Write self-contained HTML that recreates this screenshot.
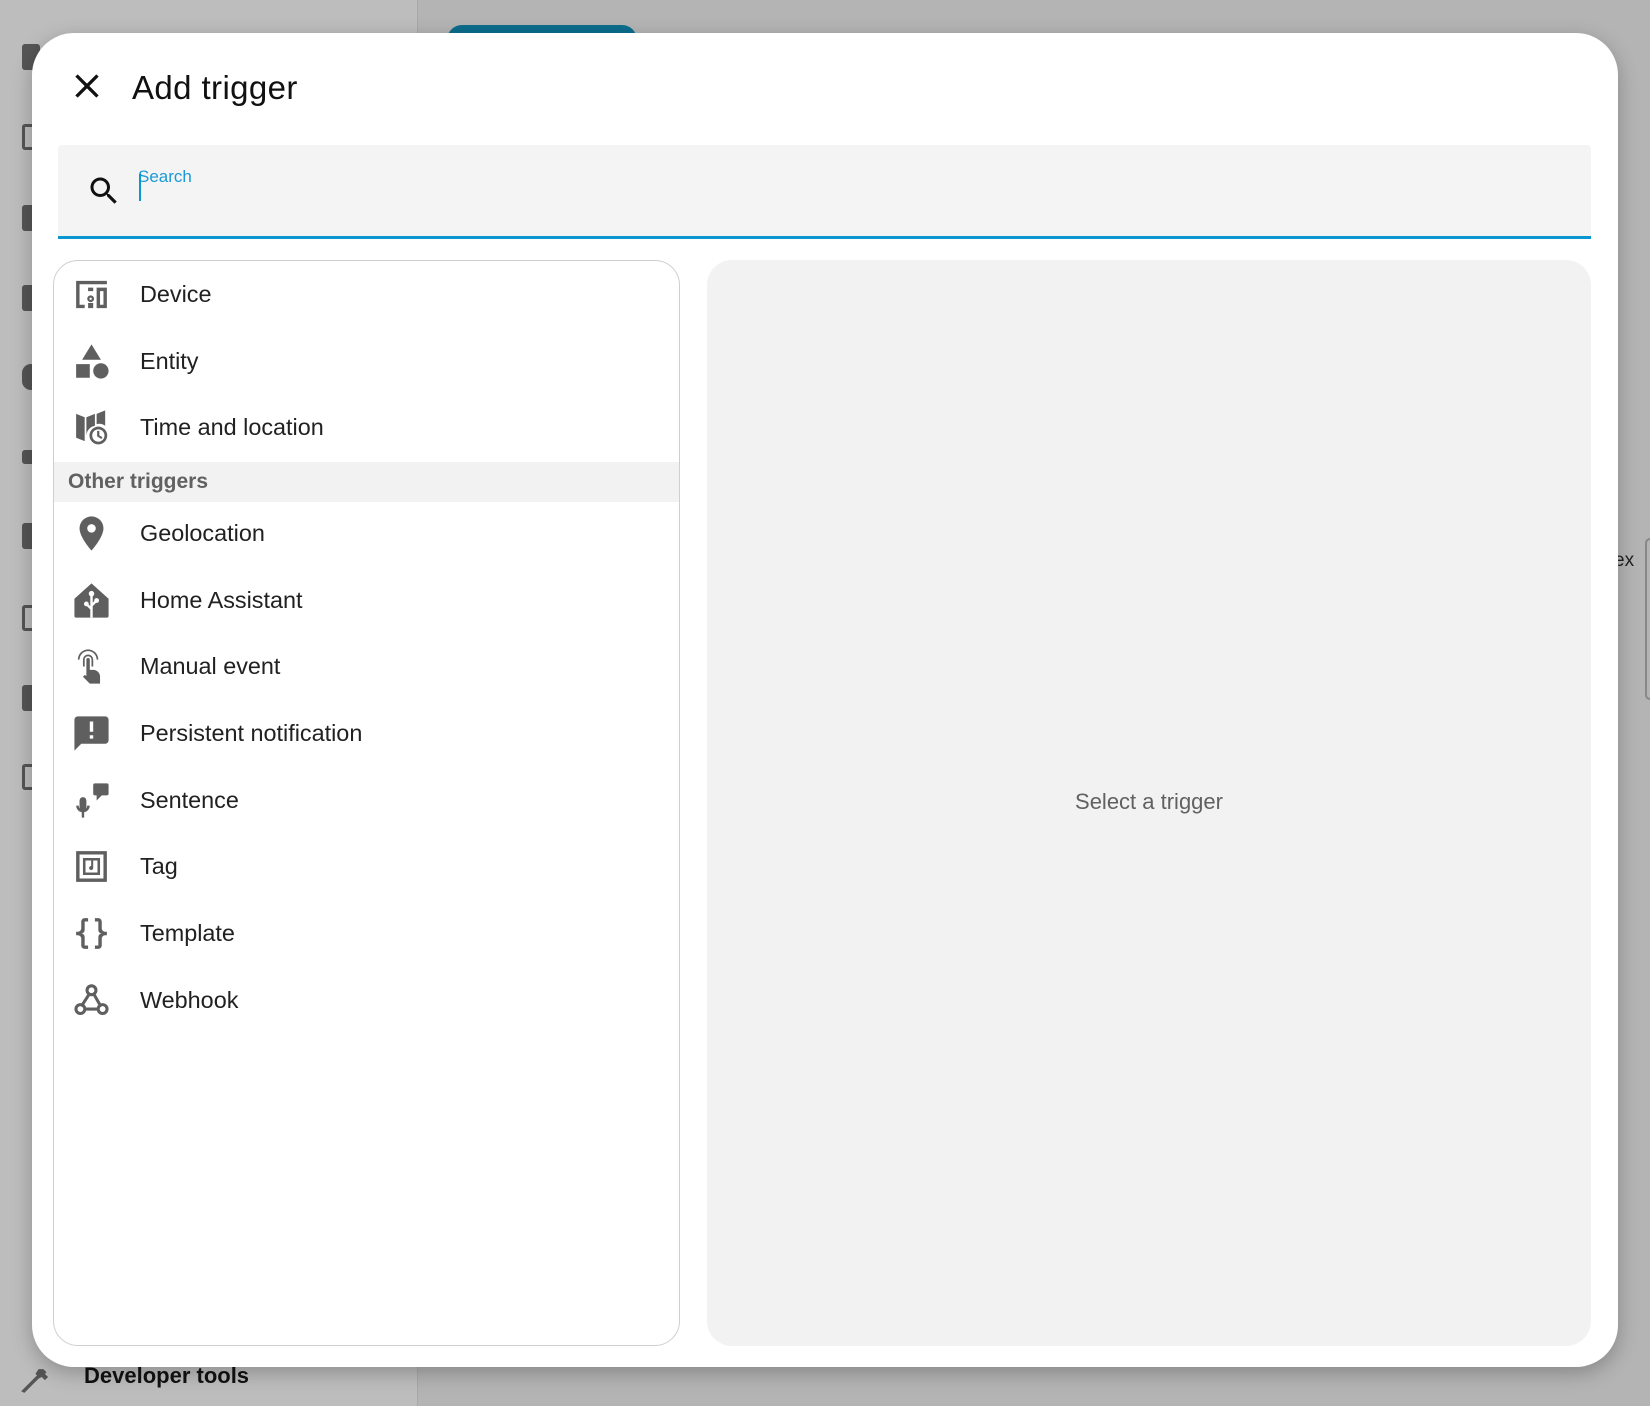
<!DOCTYPE html>
<html><head><meta charset="utf-8"><style>
*{margin:0;padding:0;box-sizing:border-box}
body{width:1650px;height:1406px;background:#bdbdbd;font-family:"Liberation Sans",sans-serif;position:relative;overflow:hidden}
.abs{position:absolute}
.right{left:417px;top:0;width:1233px;height:1406px;background:#b4b4b4;border-left:1px solid #a8a8a8}
.sb{background:#555;width:18px;height:26px;left:22px;border-radius:3px}
.dlg{left:32px;top:33px;width:1586px;height:1334px;background:#fff;border-radius:42px;box-shadow:0 6px 20px rgba(0,0,0,.25)}
.item{position:absolute;left:53px;height:60px;width:627px}
.item svg{position:absolute;left:18px;top:9.5px;width:41px;height:41px;fill:#5f5f5f}
.item span{position:absolute;left:87px;top:0;line-height:60px;font-size:23.4px;color:#212121}
</style></head><body>
<div class="abs right"></div>
<div class="abs" style="left:447px;top:25px;width:190px;height:30px;background:#0b6d8c;border-radius:15px"></div>
<div class="abs sb" style="top:44px"></div>
<div class="abs sb" style="top:124px;background:none;border:3px solid #555"></div>
<div class="abs sb" style="top:205px"></div>
<div class="abs sb" style="top:285px"></div>
<div class="abs sb" style="top:364px;border-radius:13px"></div>
<div class="abs sb" style="top:450px;height:14px"></div>
<div class="abs sb" style="top:523px"></div>
<div class="abs sb" style="top:605px;background:none;border:3px solid #555"></div>
<div class="abs sb" style="top:685px"></div>
<div class="abs sb" style="top:764px;background:none;border:3px solid #555"></div>
<div class="abs" style="left:1614px;top:550px;font-size:19px;color:#222">ex</div>
<div class="abs" style="left:1645px;top:538px;width:10px;height:162px;border:2px solid #888;border-radius:6px"></div>
<svg class="abs" style="left:18px;top:1358px" width="38" height="38" viewBox="0 0 24 24"><path fill="#555" d="M2 21l10-10-1-1 2-3 3 0 2 2-1 1 2 2-2 2-2-2-2 1-9 9z"/></svg>
<div class="abs" style="left:84px;top:1363px;font-size:22px;font-weight:bold;color:#111">Developer tools</div>

<div class="abs dlg">
  <svg class="abs" style="left:35px;top:33px" width="40" height="40" viewBox="0 0 24 24"><path fill="#111" d="M19,6.41L17.59,5L12,10.59L6.41,5L5,6.41L10.59,12L5,17.59L6.41,19L12,13.41L17.59,19L19,17.59L13.41,12L19,6.41Z"/></svg>
  <div class="abs" style="left:100px;top:35px;font-size:33px;color:#111;line-height:40px;letter-spacing:0.4px">Add trigger</div>
  <div class="abs" style="left:26px;top:112px;width:1533px;height:94px;background:#f4f4f4;border-radius:4px 4px 0 0;border-bottom:3px solid #0a97cf"></div>
  <svg class="abs" style="left:54px;top:140px" width="36" height="36" viewBox="0 0 24 24"><path fill="#111" d="M9.5,3A6.5,6.5 0 0,1 16,9.5C16,11.11 15.41,12.59 14.440,13.73L14.71,14H15.5L20.5,19L19,20.5L14,15.5V14.71L13.73,14.44C12.59,15.41 11.11,16 9.5,16A6.5,6.5 0 0,1 3,9.5A6.5,6.5 0 0,1 9.5,3M9.5,5C7,5 5,7 5,9.5C5,12 7,14 9.5,14C12,14 14,12 14,9.5C14,7 12,5 9.5,5Z"/></svg>
  <div class="abs" style="left:106px;top:134px;font-size:17px;color:#1a9ad6">Search</div>
  <div class="abs" style="left:107px;top:141px;width:2px;height:27px;background:#0a97cf"></div>

  <div class="abs" style="left:21px;top:227px;width:627px;height:1086px;border:1px solid #cfcfcf;border-radius:25px;overflow:hidden">
    <div class="abs" style="left:0;top:201px;width:627px;height:40px;background:#f2f2f2"></div>
    <div class="abs" style="left:14px;top:201px;line-height:40px;font-size:21px;color:#616161;font-weight:bold">Other triggers</div>
  </div>
  <div class="abs" style="left:675px;top:227px;width:884px;height:1086px;background:#f2f2f2;border-radius:25px"></div>
  <div class="abs" style="left:675px;top:756px;width:884px;text-align:center;font-size:22px;color:#616161">Select a trigger</div>

  <div class="item" style="top:231px;left:21px"><svg viewBox="0 0 24 24"><path d="M3 4h18v2H5v12h3v2H3zM10 8h3v2H10zM11.5 12.5a2 2 0 1 1 0 4 2 2 0 1 1 0-4zm0 1.3a.7.7 0 1 0 0 1.4.7.7 0 1 0 0-1.4zM10 17h3v3h-3zM15 8h6v12h-6zm2 2v8h2v-8z"/></svg><span>Device</span></div>
  <div class="item" style="top:298px;left:21px"><svg viewBox="0 0 24 24"><path d="M11,13.5V21.5H3V13.5H11M12,2L17.5,11H6.5L12,2M17.5,13C20,13 22,15 22,17.5C22,20 20,22 17.5,22C15,22 13,20 13,17.5C13,15 15,13 17.5,13Z"/></svg><span>Entity</span></div>
  <div class="item" style="top:364px;left:21px"><svg viewBox="0 0 24 24"><path d="M3 4l5 2v14l-5-2zM9 6l5-2v7a6 6 0 0 0-5 6zM15 4l5-2v9a6 6 0 0 0-5-1zM16 11.5a5.2 5.2 0 1 1 0 10.4 5.2 5.2 0 1 1 0-10.4zm0 1.6a3.6 3.6 0 1 0 0 7.2 3.6 3.6 0 1 0 0-7.2zM15.3 14h1.3v2.6l1.8 1.1-.6 1-2.5-1.5z"/></svg><span>Time and location</span></div>
  <div class="item" style="top:470px;left:21px"><svg viewBox="0 0 24 24"><path d="M12,11.5A2.5,2.5 0 0,1 9.5,9A2.5,2.5 0 0,1 12,6.5A2.5,2.5 0 0,1 14.5,9A2.5,2.5 0 0,1 12,11.5M12,2A7,7 0 0,0 5,9C5,14.25 12,22 12,22C12,22 19,14.25 19,9A7,7 0 0,0 12,2Z"/></svg><span>Geolocation</span></div>
  <div class="item" style="top:537px;left:21px"><svg viewBox="0 0 24 24"><path d="M12 2L2 11v10a1 1 0 0 0 1 1h18a1 1 0 0 0 1-1V11z"/><g stroke="#fff" stroke-width="1.4" fill="none"><path d="M12 8v14M12 17l-3-3M12 15l3-3"/></g><circle cx="12" cy="8" r="1.6" fill="#fff"/><circle cx="9" cy="14" r="1.4" fill="#fff"/><circle cx="15" cy="12" r="1.4" fill="#fff"/></svg><span>Home Assistant</span></div>
  <div class="item" style="top:603px;left:21px"><svg viewBox="0 0 24 24"><path d="M10 5a3 3 0 0 1 3 3v4h-1V8a2 2 0 0 0-4 0v4H7V8a3 3 0 0 1 3-3zM10 2a6 6 0 0 1 6 6h-1a5 5 0 0 0-10 0H4a6 6 0 0 1 6-6zM9 8a1 1 0 0 1 2 0v6h2a4 4 0 0 1 4 4v4H11l-4-4 1-1 1 .5z"/></svg><span>Manual event</span></div>
  <div class="item" style="top:670px;left:21px"><svg viewBox="0 0 24 24"><path d="M20,2H4A2,2 0 0,0 2,4V22L6,18H20A2,2 0 0,0 22,16V4A2,2 0 0,0 20,2M13,11H11V5H13V11M13,15H11V13H13V15Z"/></svg><span>Persistent notification</span></div>
  <div class="item" style="top:737px;left:21px"><svg viewBox="0 0 24 24"><path d="M7 10a2 2 0 0 1 2 2v4a2 2 0 0 1-4 0v-4a2 2 0 0 1 2-2zM3 15h1.5a2.5 2.5 0 0 0 5 0H11a4 4 0 0 1-3.3 3.9V22H6.3v-3.1A4 4 0 0 1 3 15zM14 2h7a1 1 0 0 1 1 1v5a1 1 0 0 1-1 1h-3l-3 3V9h-1a1 1 0 0 1-1-1V3a1 1 0 0 1 1-1z"/></svg><span>Sentence</span></div>
  <div class="item" style="top:803px;left:21px"><svg viewBox="0 0 24 24"><path d="M3 3h18v18H3zm2 2v14h14V5zM7 7h10v10H7zm1.5 1.5v7h7v-7H13v4.3a1.2 1.2 0 1 1-1.2-1.1V8.5z"/></svg><span>Tag</span></div>
  <div class="item" style="top:870px;left:21px"><svg viewBox="0 0 24 24"><path d="M8 3a2 2 0 0 0-2 2v4a2 2 0 0 1-2 2H3v2h1a2 2 0 0 1 2 2v4a2 2 0 0 0 2 2h2v-2H8v-5a2 2 0 0 0-2-2 2 2 0 0 0 2-2V5h2V3zm8 0a2 2 0 0 1 2 2v4a2 2 0 0 0 2 2h1v2h-1a2 2 0 0 0-2 2v4a2 2 0 0 1-2 2h-2v-2h2v-5a2 2 0 0 1 2-2 2 2 0 0 1-2-2V5h-2V3z"/></svg><span>Template</span></div>
  <div class="item" style="top:937px;left:21px"><svg viewBox="0 0 24 24"><g fill="none" stroke="#5f5f5f" stroke-width="1.8"><circle cx="12" cy="6" r="2.6"/><circle cx="5.5" cy="17" r="2.6"/><circle cx="18.5" cy="17" r="2.6"/><path d="M10.5 8.5L6 15.5M8 17h8M13.5 8.5l4 7"/></g></svg><span>Webhook</span></div>
</div>
</body></html>
